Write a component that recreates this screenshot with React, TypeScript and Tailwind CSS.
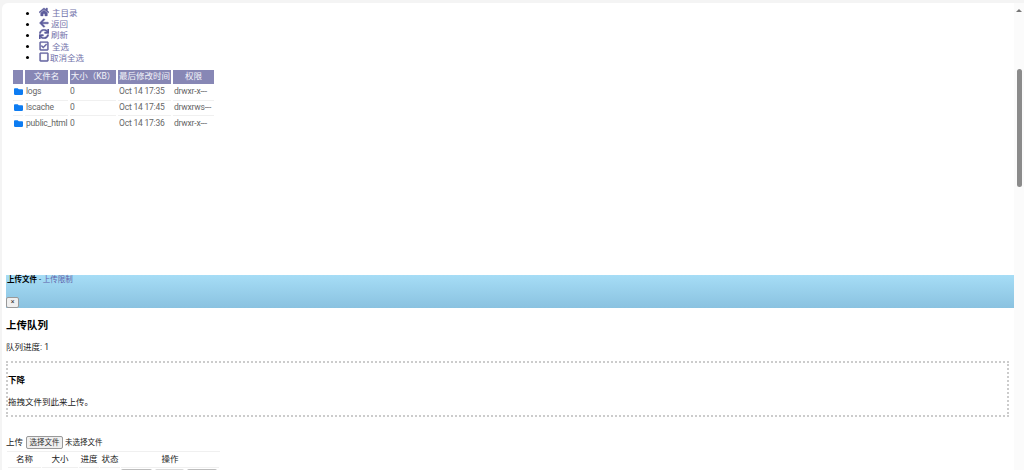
import { FaArrowLeft, FaFolder, FaHome, FaRegCheckSquare, FaRegSquare, FaSync } from 'react-icons/fa';

const NAV = [
  { icon: FaHome, label: '主目录', gap: 'ml-[1px] mr-[3px]' },
  { icon: FaArrowLeft, label: '返回', gap: 'ml-[1px] mr-[2px]' },
  { icon: FaSync, label: '刷新', gap: 'ml-[0.5px] mr-[2.5px]' },
  { icon: FaRegCheckSquare, label: '全选', gap: 'ml-[0.5px] mr-[3.5px]' },
  { icon: FaRegSquare, label: '取消全选', gap: 'ml-[0.5px] mr-[1.5px]' },
];

const FILES = [
  { name: 'logs', size: '0', time: 'Oct 14 17:35', perm: 'drwxr-x---' },
  { name: 'lscache', size: '0', time: 'Oct 14 17:45', perm: 'drwxrws---' },
  { name: 'public_html', size: '0', time: 'Oct 14 17:36', perm: 'drwxr-x---' },
];

export default function App() {
  return (
    <div className="h-[470px] overflow-hidden bg-[#f4f4f4] pl-[2px] pt-[3px] font-['Roboto','Noto_Sans_CJK_SC',sans-serif] text-[8.5px] leading-[11px] text-[#222]">
      <div className="flex h-[467px] overflow-hidden rounded-tl-md bg-white">
        <main className="w-[1012px] shrink-0 overflow-hidden pl-[4px]">
          <ul className="ml-[16px] list-disc pl-[16px] pt-[4px] text-[#7272aa]">
            {NAV.map(item => (
              <li key={item.label} className="h-[11.2px] whitespace-nowrap marker:text-black">
                <item.icon className={`inline h-[10px] w-[10px] align-[-1.5px] text-[#5c5c9c] [stroke-width:24] ${item.gap}`} />
                {item.label}
              </li>
            ))}
          </ul>

          <table className="ml-[5px] mt-[7px] w-[205px] table-fixed border-separate border-spacing-x-[2px] border-spacing-y-0">
            <thead>
              <tr className="h-[14px] text-center font-normal text-[#f4f4fa]">
                <th className="w-[10px] bg-[#8787b5] font-normal" />
                <th className="w-[43px] bg-[#8787b5] font-normal">文件名</th>
                <th className="w-[46px] bg-[#8787b5] font-normal">大小（KB）</th>
                <th className="w-[53px] bg-[#8787b5] font-normal">最后修改时间</th>
                <th className="w-[41px] bg-[#8787b5] font-normal">权限</th>
              </tr>
            </thead>
            <tbody className="text-[8.5px] tracking-[-0.2px] text-[#666]">
              {FILES.map((f, i) => (
                <tr key={f.name} className={i === 0 ? 'h-[17px]' : 'h-[15px]'}>
                  <td className={`p-0 align-middle ${i < 2 ? 'border-b border-[#f0f0f0]' : ''}`}>
                    <FaFolder className="ml-[1px] h-[9px] w-[9px] text-[#0d7cf2]" />
                  </td>
                  <td className={`p-0 pl-[1px] align-middle whitespace-nowrap ${i < 2 ? 'border-b border-[#f0f0f0]' : ''}`}>{f.name}</td>
                  <td className={`p-0 align-middle ${i < 2 ? 'border-b border-[#f0f0f0]' : ''}`}>{f.size}</td>
                  <td className={`p-0 pl-[1px] align-middle whitespace-nowrap ${i < 2 ? 'border-b border-[#f0f0f0]' : ''}`}>{f.time}</td>
                  <td className={`p-0 pl-[1px] align-middle whitespace-nowrap ${i < 2 ? 'border-b border-[#f0f0f0]' : ''}`}>{f.perm}</td>
                </tr>
              ))}
            </tbody>
          </table>

          <section className="mt-[144px] h-[33px] w-[1008px] bg-gradient-to-b from-[#a6ddf6] to-[#8ac2e0]">
            <p className="pl-[1px] text-[7.5px] leading-[10px]">
              <b className="text-black">上传文件</b> <span className="text-black">-</span> <span className="text-[#5f5fa8]">上传限制</span>
            </p>
            <button className="mt-[12px] flex h-[11px] w-[13px] items-center justify-center rounded-[2px] border border-[#999] bg-[#efefef] text-[7px] leading-none text-[#333]">
              ×
            </button>
          </section>

          <h3 className="mt-[11px] text-[10.5px] font-bold leading-[13px] text-black">上传队列</h3>
          <p className="mt-[10px] text-[8.5px] leading-[11px] text-[#222]">队列进度: 1</p>

          <div className="mt-[8px] h-[56px] w-[1003px] border-2 border-dotted border-[#ccc]">
            <h4 className="mt-[12px] text-[8.5px] font-bold leading-[11px] text-black">下降</h4>
            <p className="mt-[11px] leading-[11px]">拖拽文件到此来上传。</p>
          </div>

          <div className="mt-[19px] flex h-[14px] items-center">
            <span>上传</span>
            <button className="ml-[3px] h-[13px] w-[37px] rounded-[2px] border border-[#999] bg-[#efefef] text-[7.5px] leading-none text-[#333]">
              选择文件
            </button>
            <span className="ml-[2px] text-[7.5px] text-[#222]">未选择文件</span>
          </div>

          <table className="ml-[1px] mt-[1px] w-[213px] table-fixed border-separate border-spacing-x-[1px] border-spacing-y-0 border-t border-[#f0f0f0]">
            <thead>
              <tr className="h-[16px] text-center">
                <th className="w-[33px] border-b border-[#f0f0f0] font-normal">名称</th>
                <th className="w-[36px] border-b border-[#f0f0f0] font-normal">大小</th>
                <th className="w-[20px] border-b border-[#f0f0f0] font-normal">进度</th>
                <th className="w-[20px] border-b border-[#f0f0f0] font-normal">状态</th>
                <th className="border-b border-[#f0f0f0] font-normal">操作</th>
              </tr>
            </thead>
            <tbody>
              <tr>
                <td colSpan={4} />
                <td>
                  <div className="flex gap-[3px] pt-[1px]">
                    <span className="h-[4px] w-[31px] rounded-t-[2px] bg-[#bdbdbd]" />
                    <span className="h-[4px] w-[29px] rounded-t-[2px] bg-[#d9d9d9]" />
                    <span className="h-[4px] w-[30px] rounded-t-[2px] bg-[#bdbdbd]" />
                  </div>
                </td>
              </tr>
            </tbody>
          </table>
        </main>

        {/* scrollbar */}
        <div className="flex w-[10px] flex-col items-center bg-[#fbfbfb]">
          <svg viewBox="0 0 8 4" className="mt-[6px] h-[3px] w-[6px] fill-[#777]">
            <path d="M4 0 8 4H0Z" />
          </svg>
          <div className="mt-[57px] h-[118px] w-[5px] rounded-full bg-[#8b8b8b]" />
        </div>
      </div>
    </div>
  );
}
